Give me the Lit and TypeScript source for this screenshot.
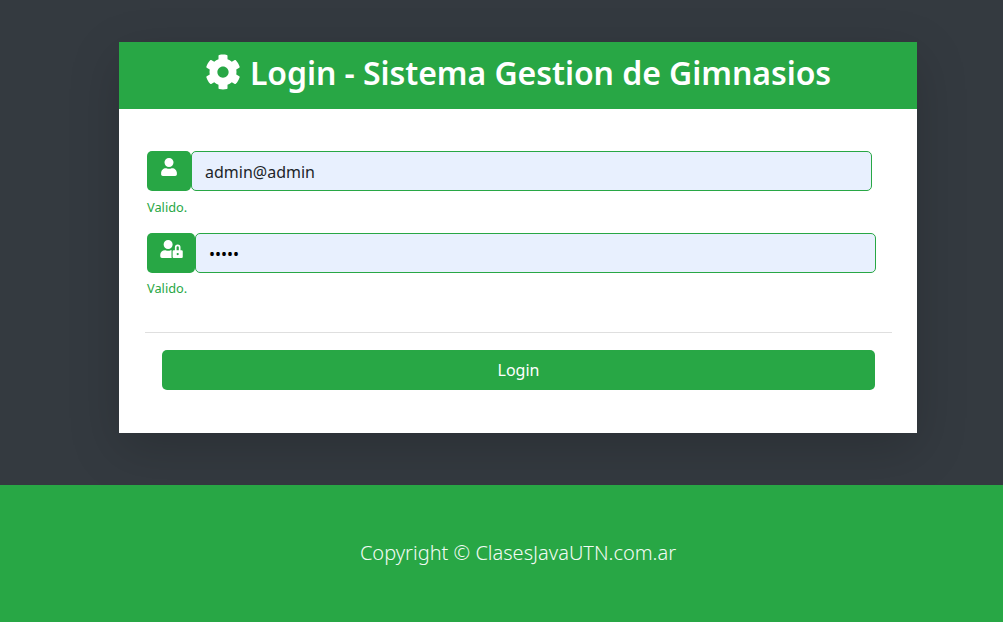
import { LitElement, html, css, svg } from "lit";
import { customElement } from "lit/decorators.js";

const gear = svg`<path d="M487.4 315.7l-42.6-24.6c4.3-23.2 4.3-47 0-70.2l42.6-24.6c4.9-2.8 7.1-8.6 5.5-14-11.1-35.6-30-67.8-54.7-94.6-3.8-4.1-10-5.1-14.8-2.3L380.8 110c-17.9-15.4-38.5-27.3-60.8-35.1V25.8c0-5.6-3.9-10.5-9.4-11.7-36.7-8.2-74.3-7.8-109.2 0-5.5 1.2-9.4 6.1-9.4 11.7V75c-22.2 7.9-42.8 19.8-60.8 35.1L88.7 85.5c-4.9-2.8-11-1.9-14.8 2.3-24.7 26.7-43.6 58.9-54.7 94.6-1.7 5.4.6 11.2 5.5 14L67.3 221c-4.3 23.2-4.3 47 0 70.2l-42.6 24.6c-4.9 2.8-7.1 8.6-5.5 14 11.1 35.6 30 67.8 54.7 94.6 3.8 4.1 10 5.1 14.8 2.3l42.6-24.6c17.9 15.4 38.5 27.3 60.8 35.1v49.2c0 5.6 3.9 10.5 9.4 11.7 36.7 8.2 74.3 7.8 109.2 0 5.5-1.2 9.4-6.1 9.4-11.7v-49.2c22.2-7.9 42.8-19.8 60.8-35.1l42.6 24.6c4.9 2.8 11 1.9 14.8-2.3 24.7-26.7 43.6-58.9 54.7-94.6 1.5-5.5-.7-11.3-5.6-14.1zM256 336c-44.1 0-80-35.9-80-80s35.9-80 80-80 80 35.9 80 80-35.9 80-80 80z"/>`;
const user = svg`<path d="M224 256c70.7 0 128-57.3 128-128S294.7 0 224 0 96 57.3 96 128s57.3 128 128 128zm89.6 32h-16.7c-22.2 10.2-46.9 16-72.9 16s-50.6-5.8-72.9-16h-16.7C60.2 288 0 348.2 0 422.4V464c0 26.5 21.5 48 48 48h352c26.5 0 48-21.5 48-48v-41.6c0-74.2-60.2-134.4-134.4-134.4z"/>`;
const userLock = svg`<path d="M224 256A128 128 0 1 0 96 128a128 128 0 0 0 128 128zm96 64a63.08 63.08 0 0 1 8.1-30.5c-4.8-.5-9.5-1.5-14.5-1.5h-16.7a174.08 174.08 0 0 1-145.8 0h-16.7A134.43 134.43 0 0 0 0 422.4V464a48 48 0 0 0 48 48h280.9a63.54 63.54 0 0 1-8.9-32zm288-32h-32v-80a80 80 0 0 0-160 0v80h-32a32 32 0 0 0-32 32v160a32 32 0 0 0 32 32h224a32 32 0 0 0 32-32V320a32 32 0 0 0-32-32zM496 432a32 32 0 1 1 32-32 32 32 0 0 1-32 32zm32-144h-64v-80a32 32 0 0 1 64 0z"/>`;

@customElement("app-root")
export class AppRoot extends LitElement {
  static styles = css`
    :host {
      display: block;
      font-family: "Noto Sans", "Open Sans", sans-serif;
      color: #212529;
    }
    .main {
      background: #343a40;
      height: 485px;
      box-sizing: border-box;
      padding: 42px 0 0 33px;
    }
    .card {
      width: 798px;
      height: 391px;
      margin: 0 auto;
      background: #fff;
      box-shadow: 0 16px 48px rgba(0, 0, 0, 0.175);
      display: flex;
      flex-direction: column;
    }
    .head {
      box-sizing: border-box;
      height: 67px;
      padding-bottom: 4px;
      background: #28a745;
      color: #fff;
      display: flex;
      align-items: center;
      justify-content: center;
      gap: 9px;
    }
    .head svg {
      width: 36px;
      height: 36px;
      fill: #fff;
      margin-top: -3px;
    }
    h1 {
      margin: 0;
      font-size: 32px;
      font-weight: 600;
      line-height: 1.2;
      letter-spacing: -0.06px;
    }
    form {
      margin: 0;
      padding: 42px 0 0 28px;
      display: flex;
      flex-direction: column;
    }
    .field {
      height: 82px;
    }
    .group {
      display: flex;
      height: 40px;
    }
    .addon {
      box-sizing: border-box;
      height: 40px;
      background: #28a745;
      border-radius: 5px;
      display: flex;
      justify-content: center;
      padding-top: 7px;
    }
    .addon.one { width: 44px; }
    .addon.two { width: 48px; }
    .addon svg {
      height: 18px;
      fill: #fff;
    }
    .addon.one svg { width: 18px; }
    .addon.two svg { width: 23px; }
    input {
      box-sizing: border-box;
      width: 681px;
      height: 40px;
      border: 1px solid #28a745;
      border-radius: 5px;
      background: #e8f0fe;
      padding: 1px 13px 0;
      font: 16px "Noto Sans", sans-serif;
      color: #212529;
      outline: none;
    }
    input[type="password"] {
      color: #000;
    }
    .ok {
      color: #28a745;
      font-size: 12.8px;
      line-height: 16px;
      margin-top: 7.6px;
    }
    .field + .field .ok {
      margin-top: 6.6px;
    }
    hr {
      margin: 17px 0 0 -2px;
      width: 747px;
      border: 0;
      border-top: 1px solid #dfdfdf;
    }
    button {
      width: 713px;
      height: 40px;
      margin: 17px 0 0 15px;
      border: 0;
      border-radius: 5px;
      background: #28a745;
      color: #fff;
      font: 16px "Noto Sans", sans-serif;
    }
    .foot {
      height: 137px;
      padding-bottom: 2px;
      background: #28a745;
      color: #f2fbf4;
      box-sizing: border-box;
      padding-left: 33px;
      display: flex;
      align-items: center;
      justify-content: center;
      font-size: 20px;
      font-weight: 300;
    }
  `;

  render() {
    return html`
      <div class="main">
        <div class="card">
          <div class="head">
            <svg viewBox="0 0 512 512">${gear}</svg>
            <h1>Login - Sistema Gestion de Gimnasios</h1>
          </div>
          <form>
            <div class="field">
              <div class="group">
                <span class="addon one"><svg viewBox="0 0 448 512">${user}</svg></span>
                <input type="text" .value=${"admin@admin"} />
              </div>
              <div class="ok">Valido.</div>
            </div>
            <div class="field">
              <div class="group">
                <span class="addon two"><svg viewBox="0 0 640 512">${userLock}</svg></span>
                <input type="password" .value=${"admin"} />
              </div>
              <div class="ok">Valido.</div>
            </div>
            <hr />
            <button type="button">Login</button>
          </form>
        </div>
      </div>
      <div class="foot">Copyright © ClasesJavaUTN.com.ar</div>
    `;
  }
}
